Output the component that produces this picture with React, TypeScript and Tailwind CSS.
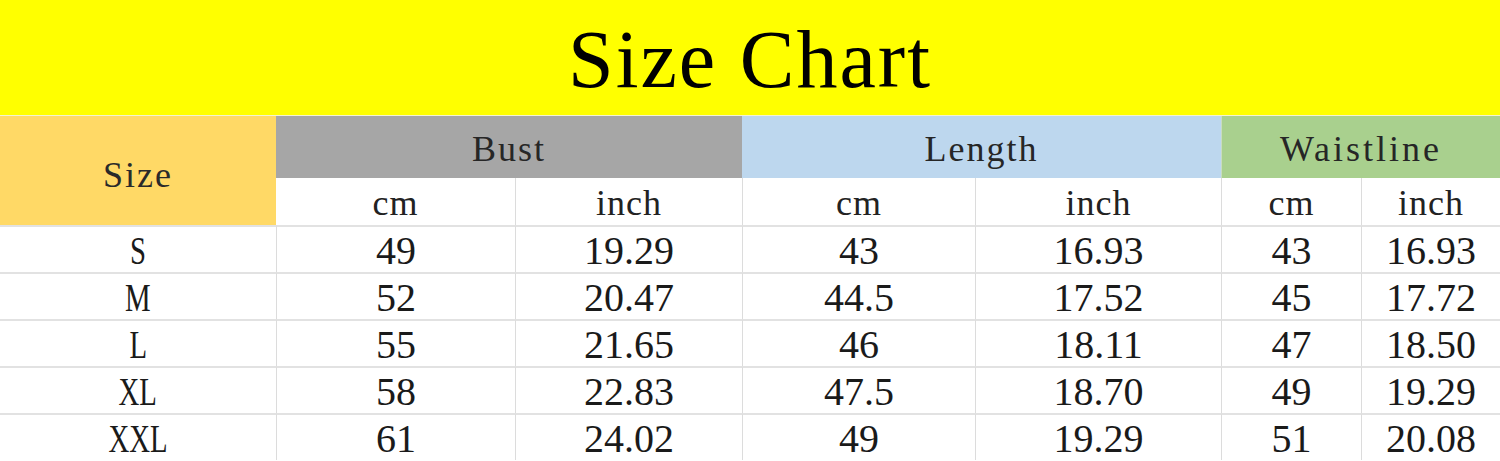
const rows = [
  { size: 'S', bust: ['49', '19.29'], length: ['43', '16.93'], waist: ['43', '16.93'] },
  { size: 'M', bust: ['52', '20.47'], length: ['44.5', '17.52'], waist: ['45', '17.72'] },
  { size: 'L', bust: ['55', '21.65'], length: ['46', '18.11'], waist: ['47', '18.50'] },
  { size: 'XL', bust: ['58', '22.83'], length: ['47.5', '18.70'], waist: ['49', '19.29'] },
  { size: 'XXL', bust: ['61', '24.02'], length: ['49', '19.29'], waist: ['51', '20.08'] },
];

const cell = 'flex items-center justify-center border-t-2 border-[#e2e2e2] text-[40px] leading-none text-[#1a1a1a] pt-[2px]';

export default function App() {
  return (
    <div className="w-[1500px] h-[461px] overflow-hidden bg-white font-['Liberation_Serif',serif]">
      <div className="h-[116px] bg-[#ffff00] flex items-center justify-center border-b border-[#f4f4d0]">
        <h1 className="text-[82px] leading-none tracking-[2px] text-black pt-[4px]">Size Chart</h1>
      </div>

      <div className="grid grid-cols-[276px_239px_227px_233px_246px_140px_139px] grid-rows-[62px_47px_repeat(5,47px)]">
        <div className="row-span-2 bg-[#ffd966] flex items-center justify-center pt-[8px] text-[36px] tracking-[2px] text-[#2a2a2a]">
          Size
        </div>
        <div className="col-span-2 bg-[#a6a6a6] flex items-center justify-center pt-[4px] text-[36px] tracking-[2px] text-[#262626]">
          Bust
        </div>
        <div className="col-span-2 bg-[#bdd7ee] flex items-center justify-center pt-[4px] text-[36px] tracking-[2px] text-[#262626]">
          Length
        </div>
        <div className="col-span-2 bg-[#a9d08e] border-l border-[#c9dcc0] flex items-center justify-center pt-[4px] text-[36px] tracking-[3px] text-[#262626]">
          Waistline
        </div>

        {['cm', 'inch', 'cm', 'inch', 'cm', 'inch'].map((u, i) => (
          <div
            key={i}
            className={`flex items-center justify-center pt-[3px] text-[36px] leading-none tracking-[1px] text-[#222] ${i === 0 ? '' : 'border-l border-[#dcdcdc]'}`}
          >
            {u}
          </div>
        ))}

        {rows.map((r) => (
          <div key={r.size} className="contents">
            <div className={`${cell}`}>
              <span className="inline-block scale-x-[0.72]">{r.size}</span>
            </div>
            <div className={`${cell} border-l border-l-[#dcdcdc]`}>{r.bust[0]}</div>
            <div className={`${cell} border-l border-l-[#dcdcdc]`}>{r.bust[1]}</div>
            <div className={`${cell} border-l border-l-[#dcdcdc]`}>{r.length[0]}</div>
            <div className={`${cell} border-l border-l-[#dcdcdc]`}>{r.length[1]}</div>
            <div className={`${cell} border-l border-l-[#dcdcdc]`}>{r.waist[0]}</div>
            <div className={`${cell} border-l border-l-[#dcdcdc]`}>{r.waist[1]}</div>
          </div>
        ))}
      </div>
    </div>
  );
}
